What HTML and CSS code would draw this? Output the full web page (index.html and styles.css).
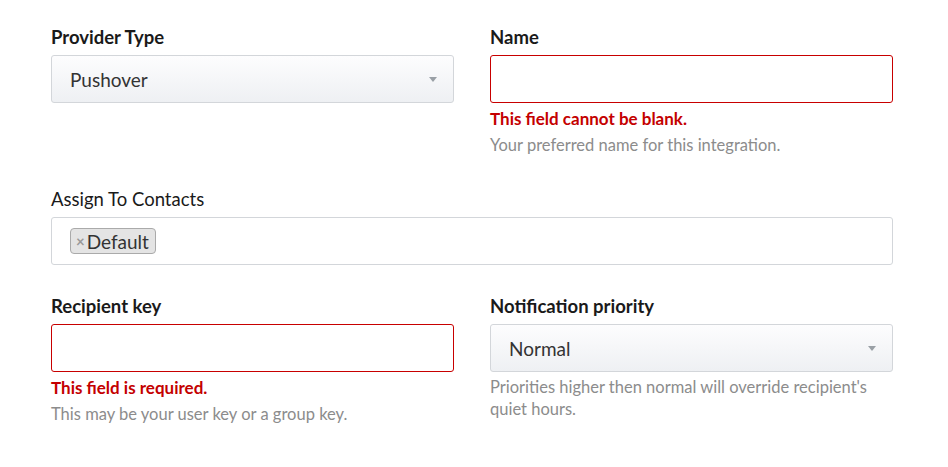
FILE: index.html
```html
<!DOCTYPE html>
<html>
<head>
<meta charset="utf-8">
<link rel="stylesheet" href="styles.css">
</head>
<body>
<form class="form">
  <div class="row">
    <div class="field">
      <label class="label bold">Provider Type</label>
      <div class="select"><span>Pushover</span><span class="caret"></span></div>
    </div>
    <div class="field">
      <label class="label bold">Name</label>
      <div class="input error"></div>
      <div class="err">This field cannot be blank.</div>
      <div class="help">Your preferred name for this integration.</div>
    </div>
  </div>
  <div class="row single">
    <div class="field">
      <label class="label">Assign To Contacts</label>
      <div class="multi"><span class="tag"><span class="x">×</span>Default</span></div>
    </div>
  </div>
  <div class="row">
    <div class="field">
      <label class="label bold">Recipient key</label>
      <div class="input error"></div>
      <div class="err">This field is required.</div>
      <div class="help">This may be your user key or a group key.</div>
    </div>
    <div class="field">
      <label class="label bold">Notification priority</label>
      <div class="select"><span>Normal</span><span class="caret"></span></div>
      <div class="help tight">Priorities higher then normal will override recipient's quiet hours.</div>
    </div>
  </div>
</form>
</body>
</html>
```
FILE: styles.css
```css
html, body { margin: 0; padding: 0; background: #fff; }
body { font-family: Lato, "Liberation Sans", sans-serif; color: #222; }
.form { width: 842px; padding: 27px 0 0 51px; }
.row { display: grid; grid-template-columns: 403px 403px; column-gap: 36px; margin-bottom: 33px; }
.row.single { grid-template-columns: 842px; margin-bottom: 31px; }
.field { display: flex; flex-direction: column; }
.label { font-size: 18.5px; line-height: 20px; margin-bottom: 8px; color: #1a1a1a; }
.label.bold { font-weight: 700; }
.select { box-sizing: border-box; height: 48px; border: 1px solid #d3d6da; border-radius: 3px;
  background: linear-gradient(#fdfdfe, #eef0f3); display: flex; align-items: center; justify-content: space-between;
  padding: 0 16px 0 18px; font-size: 19px; color: #333; }
.caret { width: 0; height: 0; border-left: 4px solid transparent; border-right: 4px solid transparent; border-top: 5px solid #9aa0a6; }
.input { box-sizing: border-box; height: 48px; border: 1px solid #ccc; border-radius: 3px; background: #fff; }
.input.error { border-color: #c80000; }
.err { color: #c40000; font-weight: 700; font-size: 17px; line-height: 20px; margin-top: 6px; }
.help { color: #8c8c8c; font-size: 16.5px; line-height: 22px; margin-top: 5px; }
.help.tight { margin-top: 4px; }
.multi { box-sizing: border-box; height: 48px; border: 1px solid #d3d6da; border-radius: 3px; display: flex; align-items: center; padding-left: 18px; }
.tag { display: inline-flex; align-items: center; height: 26px; box-sizing: border-box; padding: 0 6px 0 5px; background: #e4e4e4; border: 1px solid #aaa; border-radius: 4px; font-size: 19px; color: #333; }
.x { color: #999; font-size: 15px; margin-right: 2px; font-weight: 700; }
```
